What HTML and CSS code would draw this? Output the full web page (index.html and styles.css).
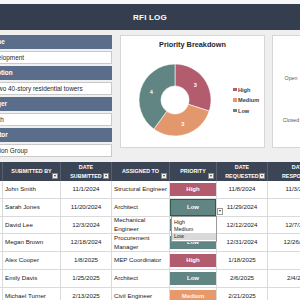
FILE: index.html
```html
<!DOCTYPE html>
<html lang="en">
<head>
<meta charset="utf-8">
<title>RFI Log</title>
<link rel="stylesheet" href="styles.css">
</head>
<body>
<div class="strip"></div>
<header class="banner"><h1>RFI LOG</h1></header>

<section class="dash">
  <div class="info">
    <div class="lbl">Project Name</div>
    <div class="val">Skyline Development</div>
    <div class="lbl">Site Description</div>
    <div class="val">Erection of two 40-story residential towers</div>
    <div class="lbl">Field Manager</div>
    <div class="val">Andrew Smith</div>
    <div class="lbl">Subcontractor</div>
    <div class="val">JJ Construction Group</div>
  </div>

  <div class="chart">
    <h2>Priority Breakdown</h2>
    <div class="chart-body">
      <svg class="donut" viewBox="0 0 76 76" width="76" height="76">
        <path class="s-high" d="M38,2 A36,36 0 0 1 72.24,49.12 L51.32,42.33 A14,14 0 0 0 38,24 Z"/>
        <path class="s-med" d="M72.24,49.12 A36,36 0 0 1 16.84,67.12 L29.77,49.33 A14,14 0 0 0 51.32,42.33 Z"/>
        <path class="s-low" d="M16.84,67.12 A36,36 0 0 1 38,2 L38,24 A14,14 0 0 0 29.77,49.33 Z"/>
        <text x="58.2" y="25.3">3</text>
        <text x="45.7" y="63.8">3</text>
        <text x="14.2" y="32.3">4</text>
      </svg>
      <ul class="legend">
        <li><i class="k-high"></i>High</li>
        <li><i class="k-med"></i>Medium</li>
        <li><i class="k-low"></i>Low</li>
      </ul>
    </div>
  </div>

  <div class="status">
    <span>Open</span>
    <span>Closed</span>
  </div>
</section>

<section class="rfi">
  <div class="th">RFI #<span class="flt"></span></div>
  <div class="th">Submitted By<span class="flt"></span></div>
  <div class="th">Date<br>Submitted<span class="flt"></span></div>
  <div class="th">Assigned To<span class="flt"></span></div>
  <div class="th">Priority<span class="flt"></span></div>
  <div class="th">Date<br>Requested<span class="flt"></span></div>
  <div class="th">Date<br>Responded<span class="flt"></span></div>

  <div class="td c">RFI-001</div>
  <div class="td">John Smith</div>
  <div class="td c">11/1/2024</div>
  <div class="td">Structural Engineer</div>
  <div class="td p"><div class="pill high">High</div></div>
  <div class="td c">11/8/2024</div>
  <div class="td c">11/3/2024</div>

  <div class="td c">RFI-002</div>
  <div class="td">Sarah Jones</div>
  <div class="td c">11/20/2024</div>
  <div class="td">Architect</div>
  <div class="td p sel"><div class="pill low">Low</div><span class="dd-btn"></span>
    <ul class="dd-list"><li>High</li><li>Medium</li><li class="hi">Low</li></ul>
  </div>
  <div class="td c">11/29/2024</div>
  <div class="td c"></div>

  <div class="td c">RFI-003</div>
  <div class="td">David Lee</div>
  <div class="td c">12/3/2024</div>
  <div class="td">Mechanical Engineer</div>
  <div class="td p"><div class="pill low"></div></div>
  <div class="td c">12/12/2024</div>
  <div class="td c">12/7/2024</div>

  <div class="td c">RFI-004</div>
  <div class="td">Megan Brown</div>
  <div class="td c">12/18/2024</div>
  <div class="td">Procurement Manager</div>
  <div class="td p"><div class="pill low">Low</div></div>
  <div class="td c">12/31/2024</div>
  <div class="td c">12/26/2024</div>

  <div class="td c">RFI-005</div>
  <div class="td">Alex Cooper</div>
  <div class="td c">1/8/2025</div>
  <div class="td">MEP Coordinator</div>
  <div class="td p"><div class="pill high">High</div></div>
  <div class="td c">1/18/2025</div>
  <div class="td c"></div>

  <div class="td c">RFI-006</div>
  <div class="td">Emily Davis</div>
  <div class="td c">1/25/2025</div>
  <div class="td">Architect</div>
  <div class="td p"><div class="pill low">Low</div></div>
  <div class="td c">2/6/2025</div>
  <div class="td c">2/4/2025</div>

  <div class="td c">RFI-007</div>
  <div class="td">Michael Turner</div>
  <div class="td c">2/13/2025</div>
  <div class="td">Civil Engineer</div>
  <div class="td p"><div class="pill med">Medium</div></div>
  <div class="td c">2/21/2025</div>
  <div class="td c"></div>

  <div class="td c">RFI-008</div>
  <div class="td">Chris Wilson</div>
  <div class="td c">3/2/2025</div>
  <div class="td">Plumbing Engineer</div>
  <div class="td p"><div class="pill high">High</div></div>
  <div class="td c">3/10/2025</div>
  <div class="td c">3/8/2025</div>
</section>
</body>
</html>
```

FILE: styles.css
```css
* { box-sizing: border-box; margin: 0; padding: 0; }

html, body {
  width: 300px;
  height: 300px;
  overflow: hidden;
}

body {
  background: #efefef;
  font-family: "Liberation Sans", Arial, sans-serif;
  color: #1a1a1a;
}

.strip {
  height: 4px;
  background: #f7f7f7;
}

.banner {
  height: 26px;
  background: #353e4e;
  display: flex;
  align-items: center;
  justify-content: center;
}

.banner h1 {
  font-size: 8px;
  font-weight: 700;
  color: #fff;
  letter-spacing: 0.2px;
}

/* ---------- dashboard ---------- */
.dash {
  display: flex;
  align-items: flex-start;
  padding-top: 5px;
}

.info {
  flex: none;
  width: 152px;
  margin-left: -40px;
  display: flex;
  flex-direction: column;
  gap: 2px;
}

.lbl {
  height: 14px;
  background: #5a6e8c;
  color: #fff;
  font-weight: 700;
  font-size: 6.4px;
  line-height: 14px;
  padding-left: 4px;
  white-space: nowrap;
}

.val {
  height: 13px;
  background: #fff;
  border: 1px solid #c9c9c9;
  font-size: 6.4px;
  line-height: 11px;
  padding-left: 3px;
  white-space: nowrap;
  color: #1f1f1f;
}

.chart {
  flex: none;
  width: 145px;
  height: 113px;
  margin-left: 8px;
  background: #fff;
  border: 1px solid #d6d6d6;
  padding-top: 4px;
}

.chart h2 {
  font-size: 7.3px;
  line-height: 10px;
  font-weight: 700;
  text-align: center;
  color: #262626;
}

.chart-body {
  display: flex;
  align-items: center;
  margin-top: 12px;
  padding-left: 16px;
}

.donut {
  flex: none;
  display: block;
}

.donut path {
  stroke: #fff;
  stroke-width: 0.6;
}

.s-high { fill: #b35c6d; }
.s-med { fill: #e3976c; }
.s-low { fill: #618583; }

.donut text {
  fill: #fff;
  font-size: 5.6px;
  font-weight: 700;
  text-anchor: middle;
  font-family: "Liberation Sans", Arial, sans-serif;
}

.legend {
  list-style: none;
  margin-left: 20px;
  display: flex;
  flex-direction: column;
  gap: 2.5px;
}

.legend li {
  display: flex;
  align-items: center;
  gap: 1.5px;
  font-size: 5.6px;
  line-height: 8px;
  font-weight: 700;
  color: #404040;
}

.legend i {
  width: 3.5px;
  height: 3.5px;
  display: block;
}

.k-high { background: #b35c6d; }
.k-med { background: #e3976c; }
.k-low { background: #618583; }

.status {
  flex: none;
  width: 60px;
  height: 113px;
  margin-left: 7px;
  background: #fff;
  border: 1px solid #d6d6d6;
  display: flex;
  flex-direction: column;
  align-items: flex-start;
  gap: 34px;
  padding: 38px 0 0 7px;
}

.status span {
  width: 22px;
  text-align: center;
  font-size: 5.3px;
  line-height: 8px;
  color: #595959;
}

/* ---------- table ---------- */
.rfi {
  margin-top: 5px;
  margin-left: -38px;
  width: 369px;
  display: grid;
  grid-template-columns: 41px 58px 51px 58px 47px 51px 63px;
  grid-template-rows: 19px repeat(8, 17.75px);
  background: #fff;
}

.th {
  position: relative;
  background: #3c4555;
  color: #fff;
  font-size: 5.4px;
  line-height: 9px;
  font-weight: 700;
  text-transform: uppercase;
  text-align: center;
  display: flex;
  align-items: center;
  justify-content: center;
  border-right: 1px solid #566071;
}

.flt {
  position: absolute;
  right: 2px;
  bottom: 2px;
  width: 6px;
  height: 6px;
  background: #f2f2f2;
  border: 0.5px solid #8a8a8a;
  display: flex;
  align-items: center;
  justify-content: center;
}

.flt::after {
  content: "";
  border-left: 1.5px solid transparent;
  border-right: 1.5px solid transparent;
  border-top: 2px solid #444;
}

.td {
  border-right: 1px solid #dadada;
  border-bottom: 1px solid #dadada;
  font-size: 6.2px;
  line-height: 8.5px;
  display: flex;
  align-items: center;
  padding: 0 2px;
  color: #1a1a1a;
}

.td.c {
  justify-content: center;
  text-align: center;
}

.td.p {
  padding: 2px 0;
  align-items: stretch;
}

.pill {
  flex: 1;
  display: flex;
  align-items: center;
  justify-content: center;
  color: #fff;
  font-size: 6px;
  font-weight: 700;
}

.pill.high { background: #b35c6d; }
.pill.low { background: #618583; }
.pill.med { background: #e8996b; color: #fdf1e8; }

.td.sel {
  position: relative;
  padding: 0;
}

.td.sel .pill {
  border: 1px solid #2f5a50;
}

.dd-btn {
  position: absolute;
  left: calc(100% + 1px);
  top: 9px;
  width: 6px;
  height: 7px;
  background: #fff;
  border: 0.5px solid #999;
  display: flex;
  align-items: center;
  justify-content: center;
  z-index: 4;
}

.dd-btn::after {
  content: "";
  border-left: 1.5px solid transparent;
  border-right: 1.5px solid transparent;
  border-top: 2px solid #333;
}

.dd-list {
  position: absolute;
  top: 100%;
  left: 1px;
  width: 46px;
  background: #fff;
  border: 0.5px solid #9a9a9a;
  padding: 2px 0 1px;
  list-style: none;
  font-size: 5.4px;
  line-height: 7px;
  color: #222;
  z-index: 5;
}

.dd-list li {
  padding-left: 2px;
}

.dd-list li.hi {
  background: #d9d9d9;
}
```
